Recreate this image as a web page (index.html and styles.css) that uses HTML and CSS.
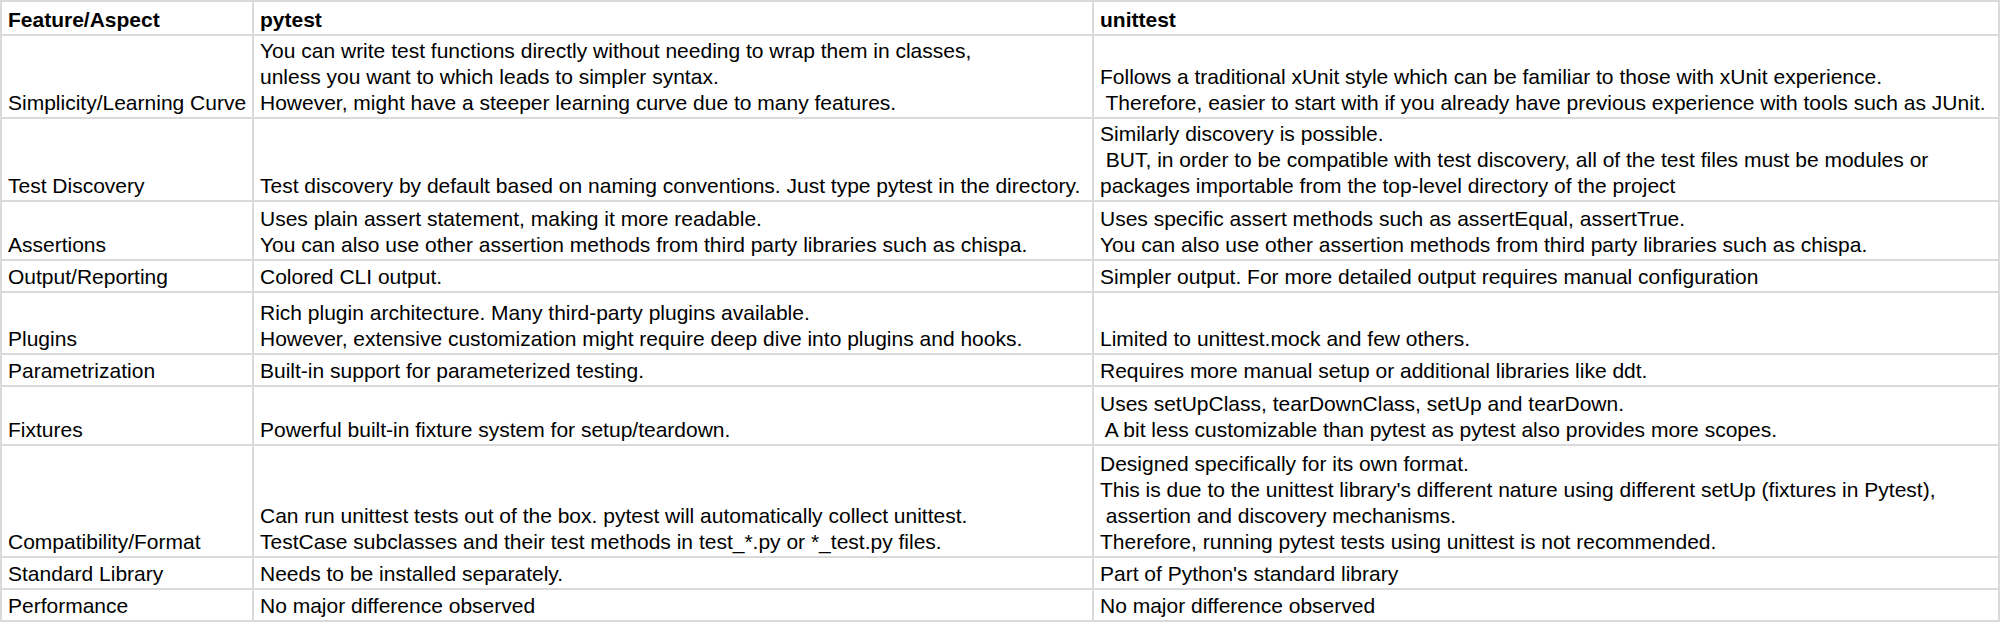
FILE: index.html
```html
<!DOCTYPE html>
<html lang="en">
<head>
<meta charset="utf-8">
<title>pytest vs unittest</title>
<link rel="stylesheet" href="styles.css">
</head>
<body>
<table class="sheet">
<colgroup><col class="c1"><col class="c2"><col class="c3"></colgroup>
<thead>
<tr class="hdr"><th>Feature/Aspect</th><th>pytest</th><th>unittest</th></tr>
</thead>
<tbody>
<tr class="r3l"><td>Simplicity/Learning Curve</td><td>You can write test functions directly without needing to wrap them in classes,<br>unless you want to which leads to simpler syntax.<br>However, might have a steeper learning curve due to many features.</td><td>Follows a traditional xUnit style which can be familiar to those with xUnit experience.<br> Therefore, easier to start with if you already have previous experience with tools such as JUnit.</td></tr>
<tr class="r3l"><td>Test Discovery</td><td>Test discovery by default based on naming conventions. Just type pytest in the directory.</td><td>Similarly discovery is possible.<br> BUT, in order to be compatible with test discovery, all of the test files must be modules or<br>packages importable from the top-level directory of the project</td></tr>
<tr class="r2l"><td>Assertions</td><td>Uses plain assert statement, making it more readable.<br>You can also use other assertion methods from third party libraries such as chispa.</td><td>Uses specific assert methods such as assertEqual, assertTrue.<br>You can also use other assertion methods from third party libraries such as chispa.</td></tr>
<tr class="r1l"><td>Output/Reporting</td><td>Colored CLI output.</td><td>Simpler output. For more detailed output requires manual configuration</td></tr>
<tr class="r2l r2t"><td>Plugins</td><td>Rich plugin architecture. Many third-party plugins available.<br>However, extensive customization might require deep dive into plugins and hooks.</td><td>Limited to unittest.mock and few others.</td></tr>
<tr class="r1l"><td>Parametrization</td><td>Built-in support for parameterized testing.</td><td>Requires more manual setup or additional libraries like ddt.</td></tr>
<tr class="r2l"><td>Fixtures</td><td>Powerful built-in fixture system for setup/teardown.</td><td>Uses setUpClass, tearDownClass, setUp and tearDown.<br> A bit less customizable than pytest as pytest also provides more scopes.</td></tr>
<tr class="r4l"><td>Compatibility/Format</td><td>Can run unittest tests out of the box. pytest will automatically collect unittest.<br>TestCase subclasses and their test methods in test_*.py or *_test.py files.</td><td>Designed specifically for its own format.<br>This is due to the unittest library's different nature using different setUp (fixtures in Pytest),<br> assertion and discovery mechanisms.<br>Therefore, running pytest tests using unittest is not recommended.</td></tr>
<tr class="r1l"><td>Standard Library</td><td>Needs to be installed separately.</td><td>Part of Python's standard library</td></tr>
<tr class="r1l"><td>Performance</td><td>No major difference observed</td><td>No major difference observed</td></tr>
</tbody>
</table>
</body>
</html>
```

FILE: styles.css
```css
html, body {
  margin: 0;
  padding: 0;
  background: #ffffff;
}

.sheet {
  border-collapse: collapse;
  table-layout: fixed;
  width: 1998px;
  margin-left: 0;
  font-family: "Liberation Sans", Arial, sans-serif;
  font-size: 21px;
  color: #000000;
  border-top: 2px solid #c6c6c6;
}

.c1 { width: 252px; }
.c2 { width: 840px; }
.c3 { width: 906px; }

.sheet th,
.sheet td {
  border: 2px solid #dadada;
  padding: 2px 6px 1px 6px;
  line-height: 26px;
  vertical-align: bottom;
  text-align: left;
  white-space: pre;
  overflow: hidden;
}

.sheet th {
  font-weight: bold;
}

.hdr { height: 34px; }
.r1l { height: 32px; }
.r2l { height: 59px; }
.r2t { height: 62px; }
.r3l { height: 83px; }
.r4l { height: 112px; }
```
